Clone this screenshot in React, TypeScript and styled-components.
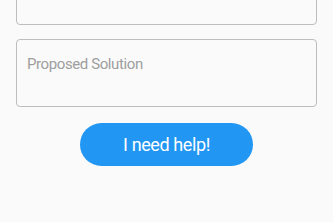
import React from 'react';
import styled, { createGlobalStyle } from 'styled-components';

const GlobalStyle = createGlobalStyle`
  html, body {
    margin: 0;
    padding: 0;
    background: #fafafa;
    font-family: Roboto, "Liberation Sans", sans-serif;
    overflow: hidden;
  }
`;

const Form = styled.div`
  display: flex;
  flex-direction: column;
  padding: 0 16px;
  margin-top: -40px;
`;

const TextArea = styled.textarea<{ $height: number }>`
  box-sizing: border-box;
  width: 100%;
  height: ${(p) => p.$height}px;
  margin: 0 0 14px;
  padding: 15px 10px;
  border: 1px solid #bdbdbd;
  border-radius: 4px;
  background: #fafafa;
  font-family: Roboto, "Liberation Sans", sans-serif;
  font-size: 15px;
  letter-spacing: -0.4px;
  color: #212121;
  resize: none;
  outline: none;
  display: block;

  &::placeholder {
    color: #9e9e9e;
  }
`;

const HelpButton = styled.button`
  align-self: center;
  width: 173px;
  height: 43px;
  margin-top: 2px;
  border: none;
  border-radius: 22px;
  background: #2196f3;
  color: #ffffff;
  font-family: Roboto, "Liberation Sans", sans-serif;
  font-size: 18px;
  letter-spacing: -0.4px;
  cursor: pointer;
`;

export default function App() {
  return (
    <>
      <GlobalStyle />
      <Form>
        <TextArea $height={65} placeholder="Describe the problem" />
        <TextArea $height={68} placeholder="Proposed Solution" />
        <HelpButton>I need help!</HelpButton>
      </Form>
    </>
  );
}
